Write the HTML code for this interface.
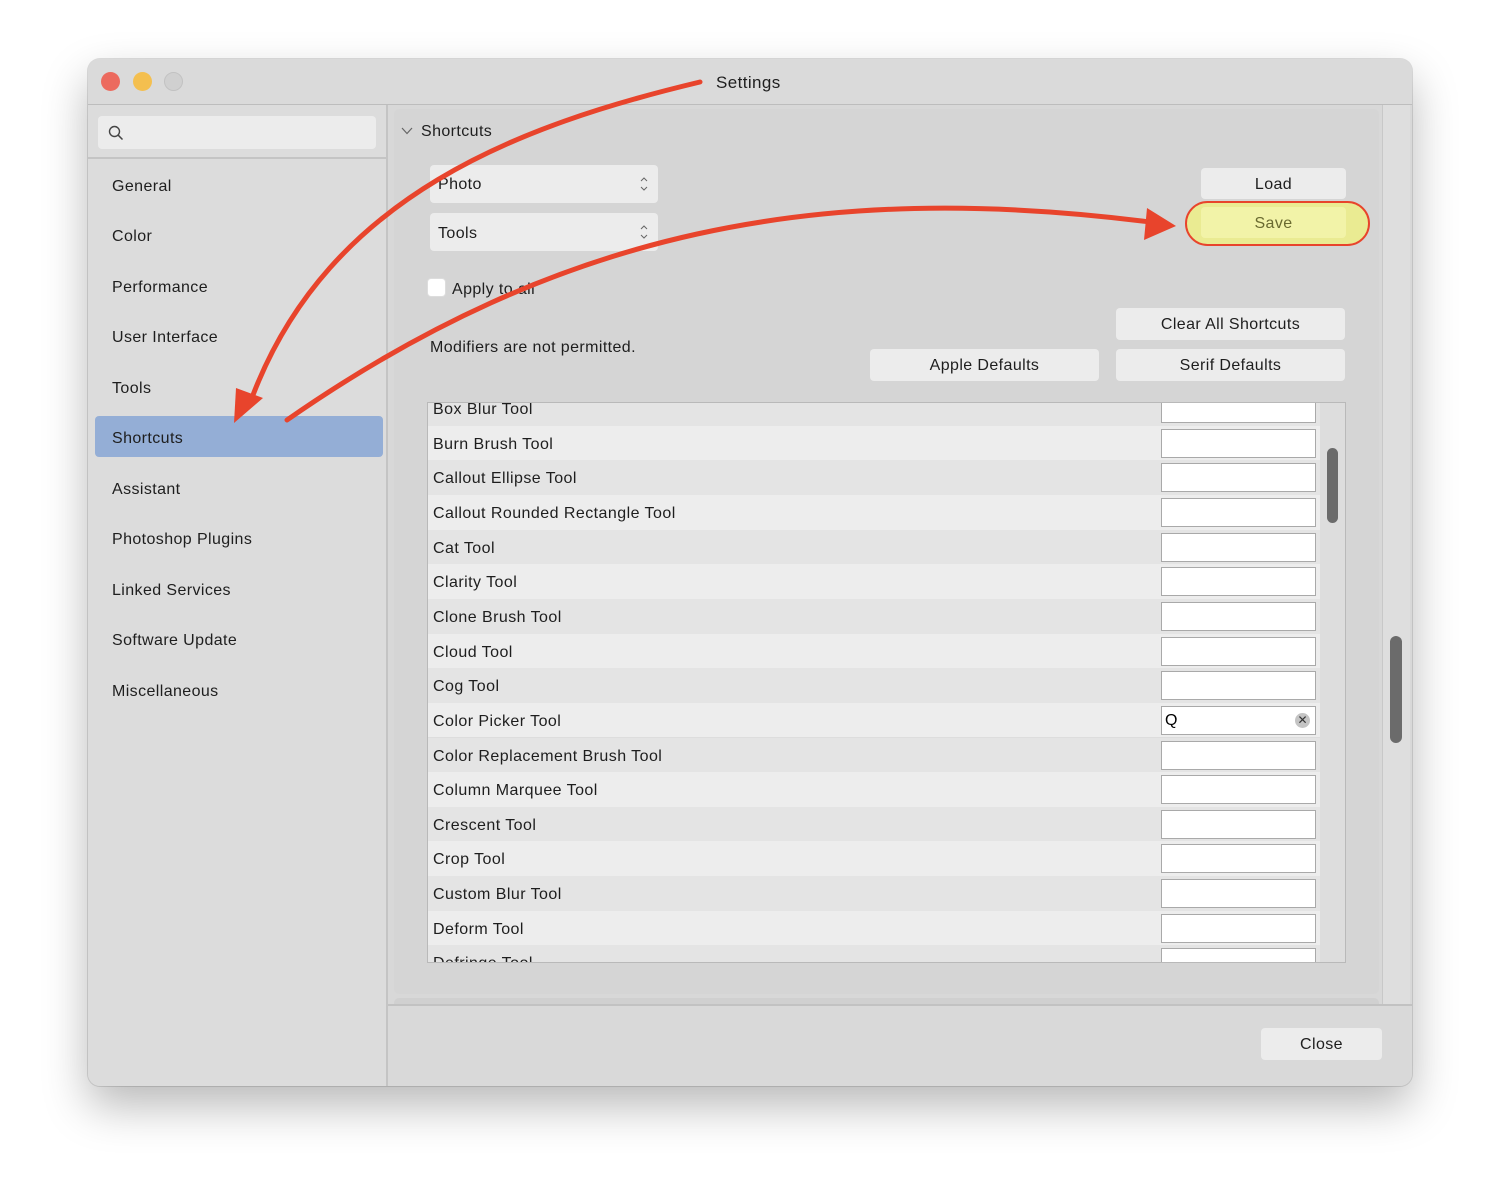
<!DOCTYPE html>
<html><head><meta charset="utf-8"><style>
*{margin:0;padding:0;box-sizing:border-box}
body{width:1500px;height:1203px;background:#fff;font-family:"Liberation Sans",sans-serif;color:#1e1e1e;position:relative;overflow:hidden}
.abs{position:absolute}
.win{left:88px;top:59px;width:1324px;height:1027px;border-radius:12px;background:#d8d8d8;box-shadow:0 20px 45px rgba(0,0,0,.28),0 0 0 1px rgba(0,0,0,.12);overflow:hidden}
.t{font-size:16px;letter-spacing:.4px}
.btn{background:#ececec;border-radius:4px;font-size:16px;text-align:center;letter-spacing:.4px}
.row{position:absolute;left:0;width:892px;height:34.65px}
.row span{position:absolute;left:5px;top:10px;font-size:16px;letter-spacing:.45px}
.fld{position:absolute;left:733px;top:3px;width:155px;height:29px;background:#fff;border:1.5px solid #a9a9a9}
</style></head><body>
<div class="abs win">
  <div class="abs" style="left:0;top:0;width:1324px;height:46px;background:#dadada;border-bottom:1px solid #bdbdbd"></div>
  <div class="abs" style="left:13px;top:13px;width:19px;height:19px;border-radius:50%;background:#ec6a5e"></div>
  <div class="abs" style="left:45px;top:13px;width:19px;height:19px;border-radius:50%;background:#f4bf4f"></div>
  <div class="abs" style="left:76px;top:13px;width:19px;height:19px;border-radius:50%;background:#d0d0d0;border:1px solid #c2c2c2"></div>
  <div class="abs" style="left:628px;top:14px;font-size:17px;letter-spacing:.4px">Settings</div>
  <div class="abs" style="left:0;top:46px;width:300px;height:981px;background:#dcdcdc;border-right:2px solid #c4c4c4"></div>
  <div class="abs" style="left:0;top:98px;width:300px;height:2px;background:#c4c4c4"></div>
  <div class="abs" style="left:10px;top:57px;width:278px;height:33px;background:#ececec;border-radius:4px"></div>
  <svg class="abs" style="left:20px;top:66px" width="16" height="16" viewBox="0 0 16 16"><circle cx="6.5" cy="6.5" r="5" fill="none" stroke="#444" stroke-width="1.4"/><path d="M10.2 10.2L14.5 14.5" stroke="#444" stroke-width="1.5"/></svg>
  <div class="abs" style="left:7px;top:357px;width:288px;height:41px;background:#94aed6;border-radius:4px"></div>
  <div class="abs t" style="left:24px;top:119px">General</div>
  <div class="abs t" style="left:24px;top:169px">Color</div>
  <div class="abs t" style="left:24px;top:220px">Performance</div>
  <div class="abs t" style="left:24px;top:270px">User Interface</div>
  <div class="abs t" style="left:24px;top:321px">Tools</div>
  <div class="abs t" style="left:24px;top:371px">Shortcuts</div>
  <div class="abs t" style="left:24px;top:422px">Assistant</div>
  <div class="abs t" style="left:24px;top:472px">Photoshop Plugins</div>
  <div class="abs t" style="left:24px;top:523px">Linked Services</div>
  <div class="abs t" style="left:24px;top:573px">Software Update</div>
  <div class="abs t" style="left:24px;top:624px">Miscellaneous</div>
  <div class="abs" style="left:1294px;top:46px;width:28px;height:900px;background:#dedede;border-left:1px solid #c8c8c8"></div>
  <div class="abs" style="left:1302px;top:577px;width:12px;height:107px;border-radius:6px;background:#6b6b6b"></div>
  <div class="abs" style="left:306px;top:50px;width:985px;height:885px;background:#d5d5d5;border-radius:5px"></div>
  <div class="abs" style="left:306px;top:939px;width:985px;height:10px;background:#d0d0d0;border-radius:5px 5px 0 0"></div>
  <div class="abs" style="left:300px;top:945px;width:1024px;height:82px;background:#d9d9d9;border-top:2px solid #c2c2c2"></div>
  <svg class="abs" style="left:313px;top:68px" width="12" height="8" viewBox="0 0 12 8"><path d="M1 1L6 6.5L11 1" fill="none" stroke="#666" stroke-width="1.2"/></svg>
  <div class="abs t" style="left:333px;top:64px">Shortcuts</div>
  <div class="abs" style="left:342px;top:106px;width:228px;height:38px;background:#ececec;border-radius:4px"></div>
  <div class="abs t" style="left:350px;top:117px">Photo</div>
  <div class="abs" style="left:342px;top:154px;width:228px;height:38px;background:#ececec;border-radius:4px"></div>
  <div class="abs t" style="left:350px;top:166px">Tools</div>
  <svg class="abs" style="left:551px;top:116px" width="10" height="18" viewBox="0 0 10 18"><path d="M2 6L5 3L8 6M2 12L5 15L8 12" fill="none" stroke="#666" stroke-width="1"/></svg>
  <svg class="abs" style="left:551px;top:164px" width="10" height="18" viewBox="0 0 10 18"><path d="M2 6L5 3L8 6M2 12L5 15L8 12" fill="none" stroke="#666" stroke-width="1"/></svg>
  <div class="abs" style="left:339px;top:219px;width:19px;height:19px;background:#fff;border-radius:4px;border:1px solid #ddd"></div>
  <div class="abs t" style="left:364px;top:222px">Apply to all</div>
  <div class="abs t" style="left:342px;top:280px">Modifiers are not permitted.</div>
  <div class="abs btn" style="left:1113px;top:109px;width:145px;height:31px;line-height:33px">Load</div>
  <div class="abs" style="left:1097px;top:142px;width:185px;height:45px;border-radius:23px;background:#eaeb92;border:2.5px solid #e8442c"></div>
  <div class="abs btn" style="left:1113px;top:148px;width:145px;height:31px;line-height:33px;background:#f2f3a8;color:#6a6a30">Save</div>
  <div class="abs btn" style="left:1028px;top:249px;width:229px;height:32px;line-height:34px">Clear All Shortcuts</div>
  <div class="abs btn" style="left:782px;top:290px;width:229px;height:32px;line-height:34px">Apple Defaults</div>
  <div class="abs btn" style="left:1028px;top:290px;width:229px;height:32px;line-height:34px">Serif Defaults</div>
  <div class="abs" style="left:339px;top:343px;width:919px;height:561px;background:#dddddd;border:1.5px solid #b9b9b9;overflow:hidden">
    <div class="abs" style="left:0;top:-12px;width:900px">
      <div class="row" style="top:0;background:#e4e4e4"><span>Box Blur Tool</span><div class="fld"></div></div>
      <div class="row" style="top:34.65px;background:#ededed"><span>Burn Brush Tool</span><div class="fld"></div></div>
      <div class="row" style="top:69.3px;background:#e4e4e4"><span>Callout Ellipse Tool</span><div class="fld"></div></div>
      <div class="row" style="top:103.95px;background:#ededed"><span>Callout Rounded Rectangle Tool</span><div class="fld"></div></div>
      <div class="row" style="top:138.6px;background:#e4e4e4"><span>Cat Tool</span><div class="fld"></div></div>
      <div class="row" style="top:173.25px;background:#ededed"><span>Clarity Tool</span><div class="fld"></div></div>
      <div class="row" style="top:207.9px;background:#e4e4e4"><span>Clone Brush Tool</span><div class="fld"></div></div>
      <div class="row" style="top:242.55px;background:#ededed"><span>Cloud Tool</span><div class="fld"></div></div>
      <div class="row" style="top:277.2px;background:#e4e4e4"><span>Cog Tool</span><div class="fld"></div></div>
      <div class="row" style="top:311.85px;background:#ededed"><span>Color Picker Tool</span><div class="fld"><b style="position:absolute;left:3px;top:5px;font-size:16px;font-weight:normal;color:#000">Q</b><div style="position:absolute;right:5px;top:6px;width:15px;height:15px;border-radius:50%;background:#c4c4c4;font-size:12px;line-height:15px;text-align:center;color:#333">✕</div></div></div>
      <div class="row" style="top:346.5px;background:#e4e4e4"><span>Color Replacement Brush Tool</span><div class="fld"></div></div>
      <div class="row" style="top:381.15px;background:#ededed"><span>Column Marquee Tool</span><div class="fld"></div></div>
      <div class="row" style="top:415.8px;background:#e4e4e4"><span>Crescent Tool</span><div class="fld"></div></div>
      <div class="row" style="top:450.45px;background:#ededed"><span>Crop Tool</span><div class="fld"></div></div>
      <div class="row" style="top:485.1px;background:#e4e4e4"><span>Custom Blur Tool</span><div class="fld"></div></div>
      <div class="row" style="top:519.75px;background:#ededed"><span>Deform Tool</span><div class="fld"></div></div>
      <div class="row" style="top:554.4px;background:#e4e4e4"><span>Defringe Tool</span><div class="fld"></div></div>
    </div>
    <div class="abs" style="left:899px;top:45px;width:11px;height:75px;border-radius:6px;background:#6b6b6b"></div>
  </div>
  <div class="abs btn" style="left:1173px;top:969px;width:121px;height:32px;line-height:34px">Close</div>
</div>
<svg class="abs" style="left:0;top:0" width="1500" height="1203" viewBox="0 0 1500 1203">
  <g fill="none" stroke="#e8442c" stroke-width="5" stroke-linecap="round">
    <path d="M700 82 C520 125 330 195 253 395"/>
    <path d="M287 420 C560 230 820 180 1150 222"/>
  </g>
  <g fill="#e8442c">
    <path d="M234 423 L236 388 L263 398 Z"/>
    <path d="M1176 226 L1144 240 L1147 208 Z"/>
  </g>
</svg>
</body></html>
